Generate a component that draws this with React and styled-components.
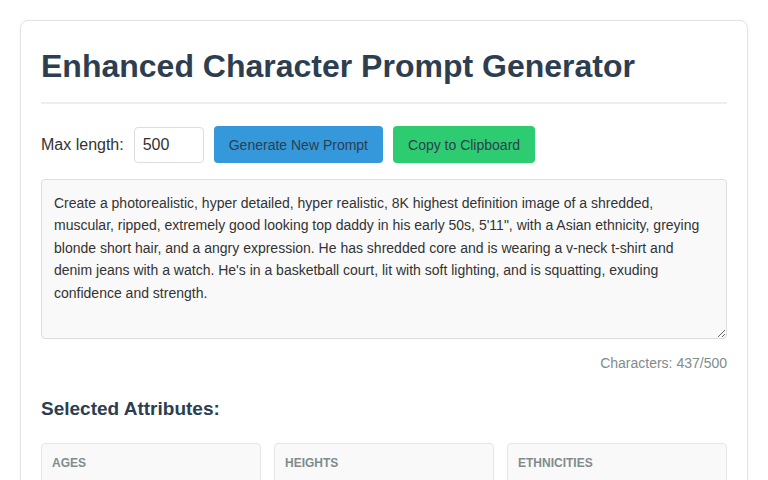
import React, { useState } from 'react'
import styled, { createGlobalStyle } from 'styled-components'

const GlobalStyle = createGlobalStyle`
    body {
        margin: 0;
        background: #fff;
        font-family: "Liberation Sans", Arial, sans-serif;
        color: #333;
    }
`;

const Page = styled.div`
    padding: 20px;
`;

const Card = styled.div`
    border: 1px solid #e2e2e2;
    border-radius: 8px;
    padding: 20px 20px 40px;
    background: #fff;
    box-shadow: 0 2px 6px rgba(0, 0, 0, 0.04);
`;

const Title = styled.h1`
    margin: 0;
    padding: 7px 0 17px;
    font-size: 32px;
    font-weight: bold;
    color: #2c3e50;
    border-bottom: 2px solid #eee;
`;

const Controls = styled.div`
    display: flex;
    align-items: center;
    gap: 10px;
    margin-top: 22px;
`;

const Label = styled.label`
    font-size: 16px;
    color: #333;
`;

const NumberInput = styled.input`
    width: 70px;
    height: 36px;
    box-sizing: border-box;
    border: 1px solid #ddd;
    border-radius: 4px;
    padding: 0 8px;
    font-size: 16px;
    font-family: inherit;
    color: #333;
`;

const Button = styled.button`
    height: 37px;
    padding: 0 15px;
    border: none;
    border-radius: 4px;
    background: ${p => p.$bg};
    color: #2c3e50;
    font-size: 14px;
    font-family: inherit;
    cursor: pointer;
`;

const PromptBox = styled.textarea`
    display: block;
    width: 100%;
    height: 160px;
    box-sizing: border-box;
    margin-top: 16px;
    padding: 12px;
    background: #f9f9f9;
    border: 1px solid #ddd;
    border-radius: 4px;
    font-family: inherit;
    font-size: 14px;
    line-height: 1.6;
    color: #333;
    resize: vertical;
`;

const Count = styled.div`
    text-align: right;
    margin-top: 16px;
    font-size: 14px;
    color: #7f8c8d;
`;

const Subtitle = styled.h3`
    margin: 27px 0 0;
    font-size: 19px;
    font-weight: bold;
    color: #2c3e50;
`;

const AttrGrid = styled.div`
    display: grid;
    grid-template-columns: repeat(3, 1fr);
    gap: 13px;
    margin-top: 23px;
`;

const AttrCard = styled.div`
    background: #f9f9f9;
    border: 1px solid #e6e6e6;
    border-radius: 4px;
    padding: 12px 10px;
    min-height: 60px;
`;

const AttrLabel = styled.div`
    font-size: 12px;
    font-weight: bold;
    text-transform: uppercase;
    color: #7f8c8d;
`;

const promptText = `Create a photorealistic, hyper detailed, hyper realistic, 8K highest definition image of a shredded, muscular, ripped, extremely good looking top daddy in his early 50s, 5'11", with a Asian ethnicity, greying blonde short hair, and a angry expression. He has shredded core and is wearing a v-neck t-shirt and denim jeans with a watch. He's in a basketball court, lit with soft lighting, and is squatting, exuding confidence and strength.`;

const App = () => {
    const [max, setMax] = useState(500)
    return (
        <>
            <GlobalStyle />
            <Page>
                <Card>
                    <Title>Enhanced Character Prompt Generator</Title>
                    <Controls>
                        <Label>Max length:</Label>
                        <NumberInput type="text" value={max} onChange={e => setMax(e.target.value)} />
                        <Button $bg="#3498db">Generate New Prompt</Button>
                        <Button $bg="#2ecc71">Copy to Clipboard</Button>
                    </Controls>
                    <PromptBox readOnly value={promptText} />
                    <Count>Characters: {promptText.length}/{max}</Count>
                    <Subtitle>Selected Attributes:</Subtitle>
                    <AttrGrid>
                        <AttrCard><AttrLabel>Ages</AttrLabel></AttrCard>
                        <AttrCard><AttrLabel>Heights</AttrLabel></AttrCard>
                        <AttrCard><AttrLabel>Ethnicities</AttrLabel></AttrCard>
                    </AttrGrid>
                </Card>
            </Page>
        </>
    )
}

export default App
